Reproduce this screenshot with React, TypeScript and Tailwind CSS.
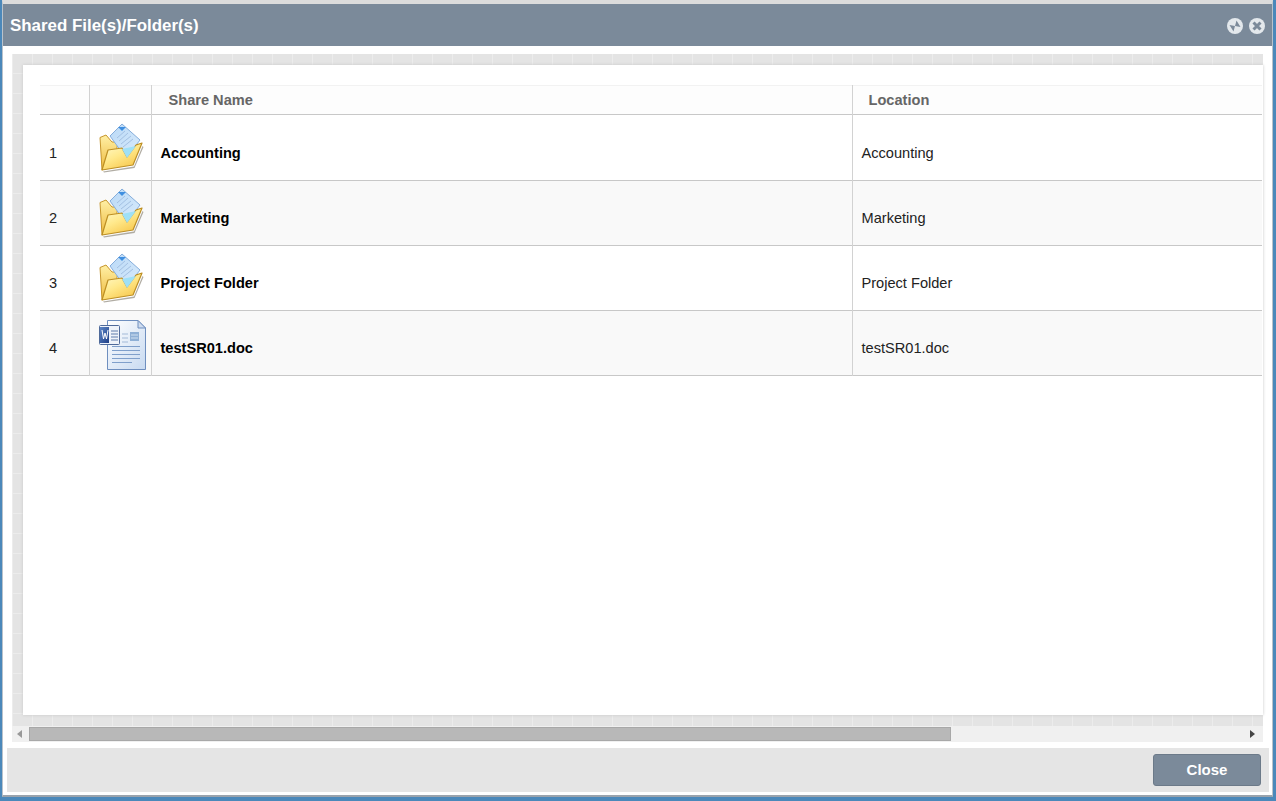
import React from "react";

const FONT = "font-['Liberation_Sans',Arial,sans-serif]";

function FolderIcon() {
  return (
    <svg width="64" height="64" viewBox="0 0 64 64" className="block">
      <defs>
        <linearGradient id="fb" x1="0" y1="0" x2="0" y2="1">
          <stop offset="0" stopColor="#fff0a6" />
          <stop offset="1" stopColor="#eeb93c" />
        </linearGradient>
        <linearGradient id="ff" x1="0" y1="0" x2="0.7" y2="1">
          <stop offset="0" stopColor="#fffbd2" />
          <stop offset="0.5" stopColor="#ffe98c" />
          <stop offset="1" stopColor="#f7c548" />
        </linearGradient>
        <linearGradient id="fp" x1="0" y1="0" x2="1" y2="1">
          <stop offset="0" stopColor="#b9d9f7" />
          <stop offset="1" stopColor="#d9ebfb" />
        </linearGradient>
      </defs>
      <path d="M13 56.5 L44 51.5 L52.5 31 L53.5 32 L44.5 53 L14 57.5 Z" fill="#7d7668" opacity="0.6" />
      <path d="M10 22.5 L16 20 L22 27 L28 27 L24 48 L12 55 Z" fill="url(#fb)" stroke="#c7962c" strokeWidth="1" />
      <path d="M20 21 L32 9 L50 25 L36 43 Z" fill="url(#fp)" stroke="#86aedb" strokeWidth="1" />
      <path d="M28 12 L36 12 L32 16 Z" fill="#3f8fe0" />
      <path d="M27 23 L35 16 M29 26 L38 18 M31 29 L41 21 M33 32 L43 24" stroke="#a3c0e2" strokeWidth="1" />
      <path d="M12 55 L18 35 L32 33 L37 42 L46 30 L52 28 L43 50 Z" fill="url(#ff)" stroke="#bd8f24" strokeWidth="1.2" strokeLinejoin="round" />
      <path d="M32 34 L46 31 L37 43 Z" fill="#9fe0f6" />
    </svg>
  );
}

function DocIcon() {
  return (
    <svg width="64" height="64" viewBox="0 0 64 64" className="block">
      <defs>
        <linearGradient id="dp" x1="0" y1="0" x2="1" y2="1">
          <stop offset="0" stopColor="#ffffff" />
          <stop offset="1" stopColor="#c8daf1" />
        </linearGradient>
        <linearGradient id="dw" x1="0" y1="0" x2="1" y2="1">
          <stop offset="0" stopColor="#5d86c6" />
          <stop offset="1" stopColor="#1f3f86" />
        </linearGradient>
      </defs>
      <path d="M17.5 8.5 H48 L55.5 16 V57.5 H17.5 Z" fill="url(#dp)" stroke="#6f8fbf" />
      <path d="M48 8.5 V16 H55.5 Z" fill="#cfdcef" stroke="#6f8fbf" />
      <rect x="40" y="20" width="9" height="9" fill="#8fb0d6" />
      <path d="M41 23 h7 M41 26 h7" stroke="#cfe0f1" />
      <path d="M32 22 h6 M32 26 h6 M32 30 h6" stroke="#a3bad8" />
      <path d="M22 34.5 h28 M22 38.5 h28 M22 42.5 h28 M22 46.5 h28 M22 50.5 h20" stroke="#7f9fcb" />
      <rect x="9.5" y="13.5" width="20" height="19" rx="1" fill="#eef3fa" stroke="#4f6a9a" />
      <rect x="10" y="15" width="9" height="16" fill="url(#dw)" />
      <path d="M12 18 L13.5 27 L15 21 L16.5 27 L18 18" stroke="#fff" strokeWidth="1" fill="none" />
      <path d="M21 19 h7 M21 22 h7 M21 25 h7 M21 28 h7" stroke="#5f7cab" />
    </svg>
  );
}

function CircleBtn({ x }: { x?: boolean }) {
  return (
    <svg width="16" height="16" viewBox="0 0 16 16" className="block">
      <circle cx="8" cy="8" r="8" fill="#e3e8ec" />
      {x ? (
        <path d="M4.5 4.5 L11.5 11.5 M11.5 4.5 L4.5 11.5" stroke="#7b8a9a" strokeWidth="3" />
      ) : (
        <path d="M8 8 L9.5 2.5 L13.5 9 Z M8 8 L6.5 13.5 L2.5 7 Z" fill="#7b8a9a" />
      )}
    </svg>
  );
}

const rows = [
  { n: 1, name: "Accounting", icon: "folder", h: "h-[66px]", bg: "bg-white" },
  { n: 2, name: "Marketing", icon: "folder", h: "h-[65px]", bg: "bg-[#f9f9f9]" },
  { n: 3, name: "Project Folder", icon: "folder", h: "h-[65px]", bg: "bg-white" },
  { n: 4, name: "testSR01.doc", icon: "doc", h: "h-[65px]", bg: "bg-[#f9f9f9]" },
];

const pattern =
  "bg-[#e4e4e4] bg-[linear-gradient(to_right,#ececec_1px,transparent_1px),linear-gradient(to_bottom,#ececec_1px,transparent_1px)] bg-[length:20px_20px] bg-[position:0px_19px]";

export default function App() {
  return (
    <div className={`${FONT} w-[1276px] h-[801px] overflow-hidden bg-[#4b88ba] pl-[2px] pr-[3px] pb-[4px]`}>
      <div className="h-full flex flex-col bg-white border-t-[4px] border-t-[#dcdcdc] border-x border-b-2 border-x-[#b9c2cb] border-b-[#9aa3ac]">
        <div className="h-[42px] shrink-0 bg-[#7b8a9a] flex items-center justify-between pt-[2px] pl-[7px] pr-[7px]">
          <span className="text-[16.9px] font-bold text-white">Shared File(s)/Folder(s)</span>
          <div className="flex items-center gap-[6px]">
            <CircleBtn />
            <CircleBtn x />
          </div>
        </div>

        <div className="flex-1 min-h-0 flex flex-col pt-[8px]">
          <div className="flex-1 min-h-0 flex flex-col ml-[9px] mr-[9px]">
            <div className={`flex-1 min-h-0 pl-[11px] pt-[11px] pb-[11px] ${pattern}`}>
              <div className="h-full bg-white pl-[17px] pt-[20px] shadow-[0_0_3px_#c8c8c8]">
                <table className="table-fixed border-collapse w-[1222px] text-[14.6px] text-[#222]">
                  <colgroup>
                    <col className="w-[49px]" />
                    <col className="w-[62px]" />
                    <col className="w-[701px]" />
                    <col className="w-[410px]" />
                  </colgroup>
                  <thead>
                    <tr className="h-[29px] bg-[#fdfdfd] border-b border-b-[#c8c8c8] border-t border-t-[#f2f2f2]">
                      <th className="border-r border-r-[#d2d2d2]"></th>
                      <th className="border-r border-r-[#d2d2d2]"></th>
                      <th className="border-r border-r-[#d2d2d2] text-left font-bold text-[#666] pl-[17px] pt-[2px]">Share Name</th>
                      <th className="text-left font-bold text-[#666] pl-[16px] pt-[2px]">Location</th>
                    </tr>
                  </thead>
                  <tbody>
                    {rows.map((r) => (
                      <tr key={r.n} className={`${r.h} ${r.bg} border-b border-b-[#c8c8c8]`}>
                        <td className="border-r border-r-[#d2d2d2] pl-[9px] pt-[12px]">{r.n}</td>
                        <td className="border-r border-r-[#d2d2d2] p-0">
                          <div className="w-[61px] h-[64px] overflow-hidden flex items-center">
                            {r.icon === "folder" ? (
                              <div className="-translate-y-px">
                                <FolderIcon />
                              </div>
                            ) : (
                              <div className="translate-y-px">
                                <DocIcon />
                              </div>
                            )}
                          </div>
                        </td>
                        <td className="border-r border-r-[#d2d2d2] pl-[9px] pt-[12px] font-bold text-black">{r.name}</td>
                        <td className="pl-[9px] pt-[12px]">{r.name}</td>
                      </tr>
                    ))}
                  </tbody>
                </table>
              </div>
            </div>
            <div className="h-[16px] shrink-0 bg-[#f0f0f0] flex items-center pl-[5px] pr-[7px]">
              <svg width="6" height="8" viewBox="0 0 6 8" className="block shrink-0">
                <path d="M5 0 V8 L0 4 Z" fill="#999" />
              </svg>
              <div className="ml-[6px] h-[14px] w-[922px] bg-[#b8b8b8] border border-[#a8a8a8]"></div>
              <div className="flex-1"></div>
              <svg width="6" height="8" viewBox="0 0 6 8" className="block shrink-0">
                <path d="M0 0 V8 L5 4 Z" fill="#444" />
              </svg>
            </div>
          </div>

          <div className="h-[44px] shrink-0 mt-[6px] mb-[3px] ml-[4px] mr-[3px] bg-[#e5e5e5] flex items-center justify-end pr-[8px]">
            <button className="w-[108px] h-[32px] rounded-[3px] bg-[#7b8a9a] border border-[#6c7a89] text-white font-bold text-[15px]">
              Close
            </button>
          </div>
        </div>
      </div>
    </div>
  );
}
